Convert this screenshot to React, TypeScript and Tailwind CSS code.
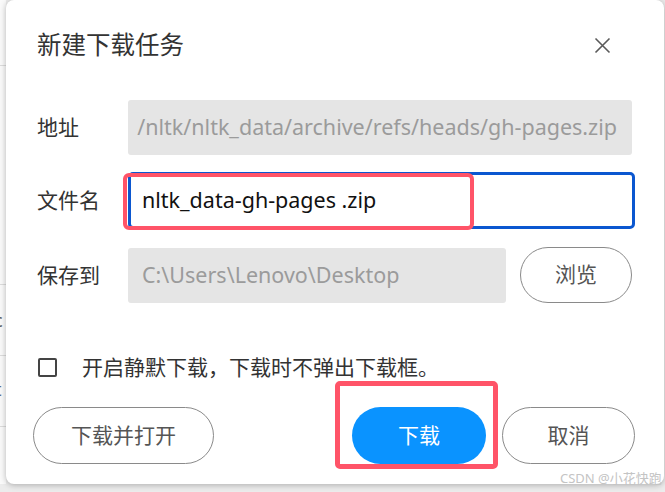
import React from 'react';

function CloseIcon() {
  return (
    <svg width="17" height="17" viewBox="0 0 17 17" fill="none" stroke="#5a5a5a" strokeWidth={1.6}>
      <path d="M1.5 1.5l14 14M15.5 1.5l-14 14" />
    </svg>
  );
}

function Row({ label, children, className = '' }: { label: string; children: React.ReactNode; className?: string }) {
  return (
    <div className={`flex items-center pl-[31px] pr-[32px] ${className}`}>
      <div className="w-[91px] shrink-0 text-[21px] text-[#333] leading-none">{label}</div>
      {children}
    </div>
  );
}

export default function App() {
  return (
    <div className="w-[665px] h-[492px] overflow-hidden bg-[#ececec] flex font-['Noto_Sans','Noto_Sans_CJK_SC',sans-serif]">
      {/* page behind the dialog */}
      <div className="w-[6px] shrink-0 h-[484px] bg-[#fafafa] flex flex-col overflow-hidden text-[#555]">
        <div className="h-[66px] border-b border-[#dcdcdc] pt-[16px] -ml-[5px] text-[18px] leading-none">j</div>
        <div className="h-[219px] border-b border-[#dcdcdc]" />
        <div className="h-[71px] border-b border-[#dcdcdc] pt-[26px] -ml-[6px] text-[18px] leading-none">c</div>
        <div className="h-[71px] border-b border-[#dcdcdc] pt-[24px] -ml-[5px] text-[18px] leading-none text-[#5a6e8c]">t</div>
        <div className="flex-1" />
      </div>

      <div className="relative w-[658px] h-[484px] shrink-0 bg-white rounded-lg shadow-[0_1px_6px_rgba(0,0,0,0.28)] flex flex-col">
        <div className="flex items-center justify-between pl-[31px] pr-[53px] pt-[29px]">
          <h1 className="text-[24.5px] leading-[32px] text-[#333]">新建下载任务</h1>
          <CloseIcon />
        </div>

        <Row label="地址" className="mt-[39px]">
          <div className="flex-1 h-[55px] bg-[#e5e5e5] rounded-[3px] flex items-center justify-end overflow-hidden pr-[15px]">
            <span className="whitespace-nowrap text-[21.5px] text-[#9b9b9b]">
              /nltk/nltk_data/archive/refs/heads/gh-pages.zip
            </span>
          </div>
        </Row>

        <Row label="文件名" className="mt-[17px]">
          <div className="flex-1 -mr-[3px] h-[57px] border-[3px] border-[#0b57d0] rounded-[5px] flex items-center pl-[11px]">
            <span className="whitespace-nowrap text-[21.5px] text-[#111]">nltk_data-gh-pages .zip</span>
          </div>
        </Row>

        <Row label="保存到" className="mt-[18px]">
          <div className="w-[378px] h-[55px] bg-[#e5e5e5] rounded-[3px] flex items-center pl-[14px]">
            <span className="whitespace-nowrap text-[21.5px] text-[#9b9b9b]">C:\Users\Lenovo\Desktop</span>
          </div>
          <button className="ml-auto w-[112px] h-[56px] rounded-full border border-[#8a8a8a] text-[21px] text-[#555]">
            浏览
          </button>
        </Row>

        <div className="flex items-center pl-[32px] mt-[52px] h-[24px]">
          <div className="w-[19px] h-[19px] border-2 border-[#444] rounded-[2px]" />
          <span className="ml-[25px] text-[21px] text-[#333] leading-none">开启静默下载，下载时不弹出下载框。</span>
        </div>

        <div className="flex items-center pl-[27px] pr-[29px] mt-[28px]">
          <button className="w-[181px] h-[57px] rounded-full border border-[#8a8a8a] text-[21px] text-[#555]">
            下载并打开
          </button>
          <div className="flex-1" />
          <button className="w-[134px] h-[57px] rounded-full bg-[#0a93ff] text-[21px] text-white">下载</button>
          <button className="ml-[16px] w-[133px] h-[57px] rounded-full border border-[#8a8a8a] text-[21px] text-[#555]">
            取消
          </button>
        </div>

        {/* annotation boxes */}
        <div className="absolute left-[117px] top-[173px] w-[351px] h-[57px] border-[4px] border-[#ff5468] rounded-[6px]" />
        <div className="absolute left-[329px] top-[381px] w-[163px] h-[88px] border-[5px] border-[#ff5468] rounded-[5px]" />
      </div>

      <div className="absolute left-[560px] top-[472px] whitespace-nowrap text-[13px] leading-none text-[#c4c4c4]">
        CSDN @小花快跑
      </div>
    </div>
  );
}
